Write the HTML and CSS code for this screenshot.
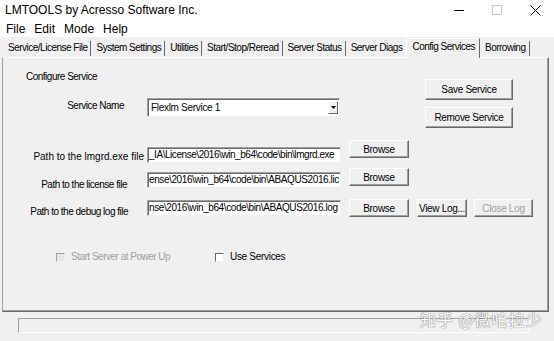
FILE: index.html
```html
<!DOCTYPE html>
<html lang="en">
<head>
    <meta charset="UTF-8">
    <title>LMTOOLS by Acresso Software Inc.</title>
    <link rel="stylesheet" href="styles.css">
</head>
<body>

    <div class="window">
        <!-- title bar -->
        <div class="titlebar">
            <span class="title">LMTOOLS by Acresso Software Inc.</span>
            <div class="controls">
                <span class="ctl"><svg width="10" height="10" viewBox="0 0 10 10"><path d="M0 5.5h10" stroke="#000" stroke-width="1"/></svg></span>
                <span class="ctl"><svg width="10" height="10" viewBox="0 0 10 10"><rect x="0.5" y="0.5" width="9" height="9" fill="none" stroke="#c8c8c8"/></svg></span>
                <span class="ctl"><svg width="11" height="11" viewBox="0 0 11 11"><path d="M0.5 0.5l10 10M10.5 0.5l-10 10" stroke="#000" stroke-width="1"/></svg></span>
            </div>
        </div>

        <!-- menu -->
        <div class="menubar">
            <span>File</span>
            <span>Edit</span>
            <span>Mode</span>
            <span>Help</span>
        </div>

        <!-- tabs -->
        <div class="tabs">
            <div class="tab">Service/License File</div>
            <div class="tab">System Settings</div>
            <div class="tab">Utilities</div>
            <div class="tab">Start/Stop/Reread</div>
            <div class="tab">Server Status</div>
            <div class="tab before-active">Server Diags</div>
            <div class="tab active">Config Services</div>
            <div class="tab">Borrowing</div>
        </div>

        <!-- Config Services page -->
        <div class="panel">
            <div class="top">
                <div class="top-left">
                    <div class="heading">Configure Service</div>
                    <div class="service-row">
                        <span class="service-label">Service Name</span>
                        <div class="combo">
                            <span class="combo-text">Flexlm Service 1</span>
                            <span class="combo-btn"><svg width="5" height="3" viewBox="0 0 5 3"><path d="M0 0h5L2.5 3z" fill="#000"/></svg></span>
                        </div>
                    </div>
                </div>
                <div class="top-right">
                    <button class="btn wide">Save Service</button>
                    <button class="btn wide">Remove Service</button>
                </div>
            </div>

            <div class="path-row row1">
                <span class="path-label">Path to the lmgrd.exe file</span>
                <div class="field">_IA\License\2016\win_b64\code\bin\lmgrd.exe</div>
                <button class="btn browse">Browse</button>
            </div>

            <div class="path-row row2">
                <span class="path-label">Path to the license file</span>
                <div class="field">ense\2016\win_b64\code\bin\ABAQUS2016.lic</div>
                <button class="btn browse">Browse</button>
            </div>

            <div class="path-row row3">
                <span class="path-label">Path to the debug log file</span>
                <div class="field">nse\2016\win_b64\code\bin\ABAQUS2016.log</div>
                <button class="btn browse">Browse</button>
                <button class="btn view-log">View Log...</button>
                <button class="btn close-log" disabled>Close Log</button>
            </div>

            <div class="checks">
                <label class="check disabled"><span class="box"></span>Start Server at Power Up</label>
                <label class="check"><span class="box"></span>Use Services</label>
            </div>
        </div>

        <!-- status bar -->
        <div class="status">
            <div class="status-box"></div>
        </div>

        <div class="watermark">知乎 @微哈拉少</div>
    </div>

</body>
</html>
```

FILE: styles.css
```css
body {
    margin: 0;
    padding: 0;
    background-color: #f0f0f0;
    font-family: "Liberation Sans", Arial, sans-serif;
    color: #000;
}

.window {
    position: relative;
    width: 554px;
    height: 341px;
    overflow: hidden;
}

/* title bar + menu */
.titlebar {
    height: 20px;
    background-color: #fff;
    display: flex;
    align-items: center;
}

.title {
    padding-left: 5px;
    font-size: 12px;
}

.controls {
    margin-left: auto;
    display: flex;
}

.ctl {
    width: 38px;
    height: 20px;
    display: flex;
    justify-content: center;
    align-items: center;
}

.menubar {
    height: 17px;
    background-color: #fff;
    display: flex;
    align-items: center;
    padding-left: 6px;
    font-size: 12px;
}

.menubar span {
    margin-right: 9px;
}

/* tabs */
.tabs {
    height: 20px;
    display: flex;
    align-items: flex-end;
    padding-left: 3px;
    font-size: 10px;
    letter-spacing: -0.5px;
}

.tab {
    height: 15px;
    line-height: 14px;
    padding: 0 3px 0 5px;
    border-right: 1px solid #696969;
    margin-bottom: 1px;
    white-space: nowrap;
}

.tab.before-active {
    border-right-color: transparent;
}

.tab.active {
    position: relative;
    z-index: 1;
    height: 19px;
    line-height: 15px;
    margin: 0 0 -1px 0;
    padding: 0 4px 0 5px;
    background-color: #f0f0f0;
    border-top: 1px solid #fff;
    border-left: 1px solid #fff;
}

/* page */
.panel {
    box-sizing: border-box;
    height: 255px;
    margin: 0 5px 0 2px;
    padding-top: 12px;
    border-top: 1px solid #fff;
    border-left: 1px solid #a0a0a0;
    border-right: 1px solid #696969;
    border-bottom: 1px solid #696969;
    box-shadow: inset -1px -1px #a0a0a0;
    font-size: 10px;
    letter-spacing: -0.3px;
}

.top {
    display: flex;
    height: 58px;
}

.top-left {
    width: 422px;
}

.heading {
    line-height: 14px;
    padding-left: 23px;
    letter-spacing: -0.5px;
}

.service-row {
    display: flex;
    margin-top: 14px;
}

.service-label {
    width: 121px;
    text-align: right;
    line-height: 14px;
    margin-top: 1px;
    letter-spacing: -0.5px;
}

.combo {
    box-sizing: border-box;
    width: 193px;
    height: 19px;
    margin-left: 23px;
    display: flex;
    align-items: center;
    background-color: #fff;
    border: 1px solid;
    border-color: #a0a0a0 #f0f0f0 #f0f0f0 #a0a0a0;
    box-shadow: inset 1px 1px #696969;
}

.combo-text {
    padding-left: 3px;
}

.combo-btn {
    box-sizing: border-box;
    margin-left: auto;
    margin-right: 1px;
    width: 10px;
    height: 13px;
    display: flex;
    justify-content: center;
    align-items: center;
    background-color: #f0f0f0;
    border: 1px solid;
    border-color: #fff #696969 #696969 #fff;
}

.top-right {
    display: flex;
    flex-direction: column;
    gap: 7px;
    padding-top: 9px;
}

/* buttons */
.btn {
    box-sizing: border-box;
    height: 18px;
    padding: 0;
    font-family: inherit;
    font-size: 10px;
    letter-spacing: -0.3px;
    color: #000;
    background-color: #f0f0f0;
    border: 1px solid;
    border-color: #fff #696969 #696969 #fff;
    box-shadow: inset -1px -1px #a0a0a0;
}

.btn:disabled {
    color: #a0a0a0;
}

.btn.wide {
    width: 88px;
    height: 21px;
}

.btn.browse {
    width: 60px;
    margin-left: 8px;
}

.btn.view-log {
    width: 50px;
    margin-left: 8px;
}

.btn.close-log {
    width: 59px;
    margin-left: 7px;
}

/* path rows */
.path-row {
    display: flex;
    align-items: flex-start;
    height: 18px;
}

.path-label {
    box-sizing: border-box;
    width: 141px;
    text-align: right;
    line-height: 14px;
    white-space: nowrap;
}

.field {
    box-sizing: border-box;
    width: 194px;
    height: 16px;
    margin-left: 3px;
    padding-left: 1px;
    line-height: 14px;
    overflow: hidden;
    white-space: nowrap;
    letter-spacing: -0.4px;
    background-color: #fff;
    border: 1px solid;
    border-color: #a0a0a0 #f0f0f0 #f0f0f0 #a0a0a0;
    box-shadow: inset 1px 1px #696969;
}

.row1 {
    margin-top: 12px;
}

.row1 .path-label {
    margin-top: 10px;
    letter-spacing: 0;
}

.row1 .field {
    margin-top: 7px;
    letter-spacing: -0.45px;
}

.row2 {
    margin-top: 10px;
}

.row2 .path-label {
    margin-top: 10px;
    padding-right: 17px;
    letter-spacing: -0.5px;
}

.row2 .field {
    margin-top: 4px;
}

.row3 {
    margin-top: 13px;
}

.row3 .path-label {
    margin-top: 6px;
    padding-right: 16px;
    letter-spacing: -0.5px;
}

.row3 .field {
    margin-top: 1px;
}

/* checkboxes */
.checks {
    display: flex;
    margin-top: 33px;
    padding-left: 53px;
}

.check {
    display: flex;
    align-items: center;
    line-height: 14px;
}

.check.disabled {
    width: 159px;
    color: #a0a0a0;
    letter-spacing: -0.5px;
}

.box {
    box-sizing: border-box;
    width: 9px;
    height: 9px;
    margin-right: 6px;
    background-color: #fff;
    border: 1px solid;
    border-color: #696969 #f0f0f0 #f0f0f0 #696969;
}

.check.disabled .box {
    background-color: #e6e6e6;
    border-color: #a0a0a0 #f0f0f0 #f0f0f0 #a0a0a0;
}

/* status bar */
.status {
    padding: 6px 0 0 18px;
}

.status-box {
    box-sizing: border-box;
    width: 512px;
    height: 15px;
    border: 1px solid;
    border-color: #a0a0a0 #fff #fff #a0a0a0;
}

.watermark {
    position: absolute;
    left: 420px;
    top: 307px;
    font-family: "Noto Sans CJK SC", sans-serif;
    font-size: 16px;
    letter-spacing: 1px;
    color: #fff;
    text-shadow: 0 0 1px #777, 0 0 1px #777;
}
```
